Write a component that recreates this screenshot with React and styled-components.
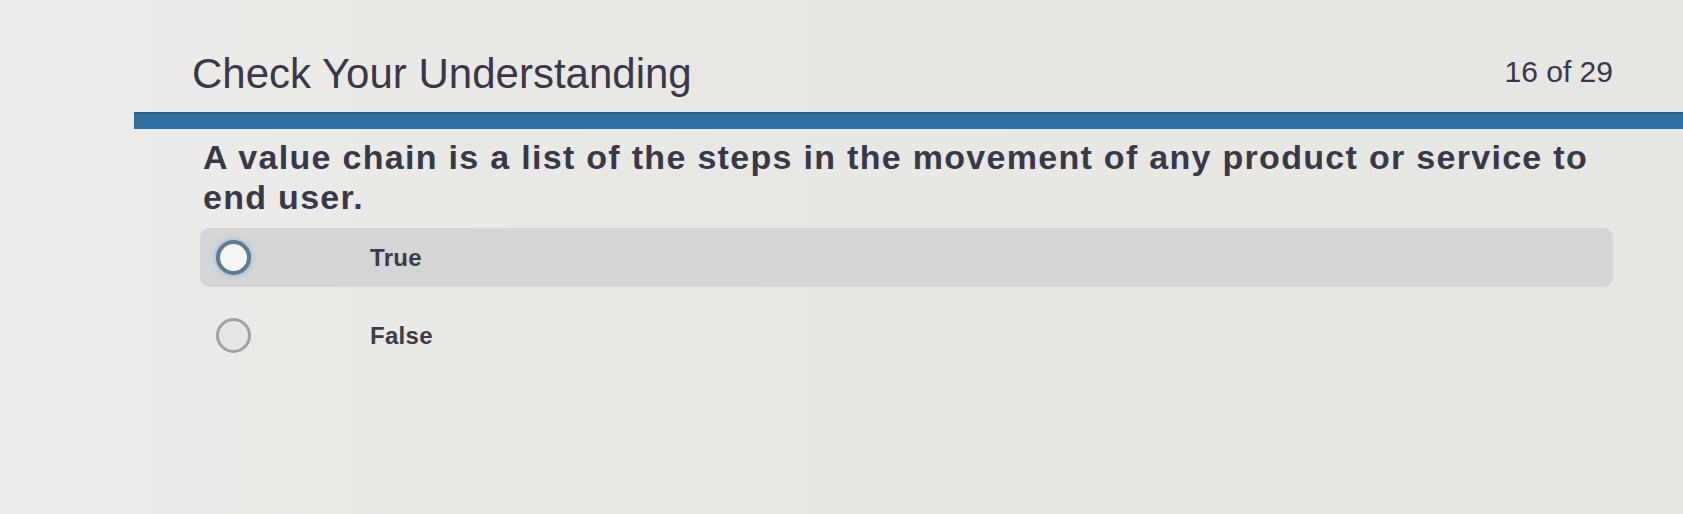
import React, { useState } from "react";
import styled, { createGlobalStyle, css } from "styled-components";

const GlobalStyles = createGlobalStyle`
  html, body {
    margin: 0;
    padding: 0;
    background: #e9e8e5;
  }
  body {
    font-family: "Liberation Sans", Arial, Helvetica, sans-serif;
    color: #3a3848;
  }
`;

const Page = styled.div`
  min-height: 514px;
  background: linear-gradient(90deg, #eeedeb 0%, #e9e8e5 30%, #e7e6e3 100%);
  overflow: hidden;
`;

/* HEADER */
const Header = styled.header`
  display: flex;
  align-items: flex-start;
  justify-content: space-between;
  padding: 50px 70px 0 192px;
`;

const Title = styled.h1`
  margin: 0;
  font-size: 42px;
  line-height: 48px;
  font-weight: normal;
  color: #3a3848;
`;

const Counter = styled.span`
  font-size: 30px;
  line-height: 44px;
  color: #3a3848;
`;

const Rule = styled.div`
  margin: 14px 0 0 134px;
  height: 17px;
  background: #2f70a0;
  border-top: 2px solid #275f89;
  box-sizing: border-box;
`;

/* QUESTION */
const Body = styled.main`
  padding: 8px 70px 0 200px;
`;

const Question = styled.p`
  margin: 0 0 0 3px;
  font-size: 34px;
  line-height: 40px;
  font-weight: bold;
  letter-spacing: 1.3px;
  color: #393848;
`;

const Options = styled.div`
  display: flex;
  flex-direction: column;
  gap: 19px;
  margin-top: 11px;
`;

const Option = styled.label`
  display: flex;
  align-items: center;
  height: 59px;
  padding-left: 16px;
  border-radius: 9px;
  cursor: pointer;
  background: ${props => (props.highlighted ? "#d4d5d5" : "transparent")};
`;

const Radio = styled.span`
  flex: none;
  width: 35px;
  height: 35px;
  border-radius: 50%;
  box-sizing: border-box;
  border: 3px solid #a2a2a1;
  background: #e6e6e4;
  ${props =>
    props.focused &&
    css`
      border: 4px solid #5d7b94;
      background: #f3f4f3;
      box-shadow: 0 0 3px 2px rgba(140, 185, 215, 0.55);
    `};
  ${props =>
    props.checked &&
    css`
      background: radial-gradient(circle, #3a6f98 0 6px, #f3f4f3 7px);
    `};
`;

const OptionText = styled.span`
  margin-left: 119px;
  font-size: 24px;
  font-weight: bold;
  letter-spacing: 0.3px;
  color: #3d3b4a;
`;

const answers = ["True", "False"];

export default function App() {
  const [picked, setPicked] = useState(null);

  return (
    <Page>
      <GlobalStyles />
      <Header>
        <Title>Check Your Understanding</Title>
        <Counter>16 of 29</Counter>
      </Header>
      <Rule />
      <Body>
        <Question>
          A value chain is a list of the steps in the movement of any product
          or service to end user.
        </Question>
        <Options>
          {answers.map((answer, i) => (
            <Option
              key={answer}
              highlighted={i === 0}
              onClick={() => setPicked(answer)}
            >
              <Radio focused={i === 0} checked={picked === answer} />
              <OptionText>{answer}</OptionText>
            </Option>
          ))}
        </Options>
      </Body>
    </Page>
  );
}
